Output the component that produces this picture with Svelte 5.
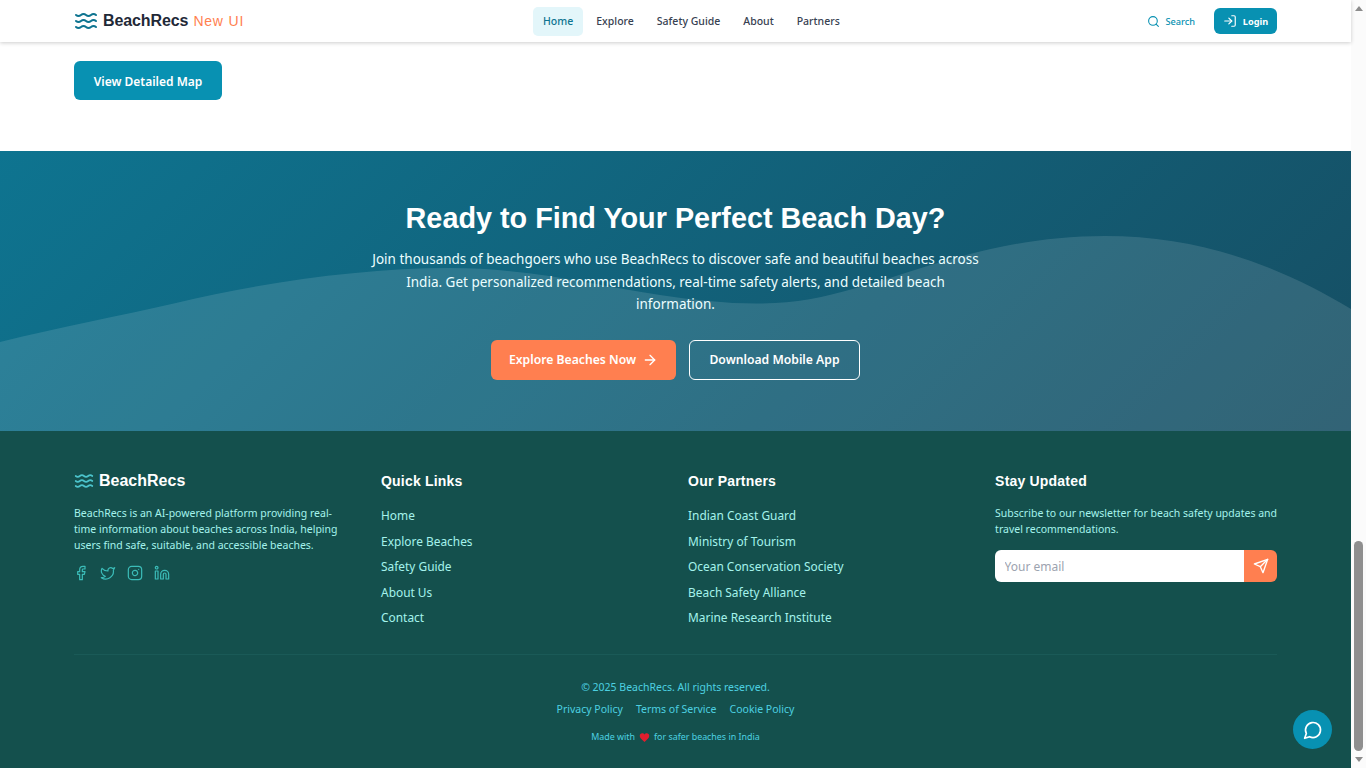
<script>
  const nav = ['Home', 'Explore', 'Safety Guide', 'About', 'Partners'];
  const quickLinks = ['Home', 'Explore Beaches', 'Safety Guide', 'About Us', 'Contact'];
  const partners = ['Indian Coast Guard', 'Ministry of Tourism', 'Ocean Conservation Society', 'Beach Safety Alliance', 'Marine Research Institute'];
  const legal = ['Privacy Policy', 'Terms of Service', 'Cookie Policy'];
</script>

{#snippet waves(size)}
  <svg width={size} height={size} viewBox="0 0 24 24" fill="none" stroke="currentColor" stroke-width="2" stroke-linecap="round" stroke-linejoin="round">
    <path d="M2 6c.6.5 1.2 1 2.5 1C7 7 7 5 9.5 5c2.6 0 2.4 2 5 2 2.5 0 2.5-2 5-2 1.3 0 1.9.5 2.5 1" />
    <path d="M2 12c.6.5 1.2 1 2.5 1 2.5 0 2.5-2 5-2 2.6 0 2.4 2 5 2 2.5 0 2.5-2 5-2 1.3 0 1.9.5 2.5 1" />
    <path d="M2 18c.6.5 1.2 1 2.5 1 2.5 0 2.5-2 5-2 2.6 0 2.4 2 5 2 2.5 0 2.5-2 5-2 1.3 0 1.9.5 2.5 1" />
  </svg>
{/snippet}

<div class="viewport">
  <div class="page">
    <header class="topbar">
      <div class="brand">
        <span class="brand-icon">{@render waves(24)}</span>
        <span class="brand-name">BeachRecs</span>
        <span class="brand-tag">New UI</span>
      </div>
      <nav class="nav">
        {#each nav as item, i}
          <a class="nav-link" class:active={i === 0} href="#top">{item}</a>
        {/each}
      </nav>
      <div class="actions">
        <button class="search-btn">
          <svg width="13" height="13" viewBox="0 0 24 24" fill="none" stroke="currentColor" stroke-width="2" stroke-linecap="round" stroke-linejoin="round"><circle cx="11" cy="11" r="8" /><path d="m21 21-4.3-4.3" /></svg>
          Search
        </button>
        <button class="login-btn">
          <svg width="14" height="14" viewBox="0 0 24 24" fill="none" stroke="currentColor" stroke-width="2" stroke-linecap="round" stroke-linejoin="round"><path d="M15 3h4a2 2 0 0 1 2 2v14a2 2 0 0 1-2 2h-4" /><path d="m10 17 5-5-5-5" /><path d="M15 12H3" /></svg>
          Login
        </button>
      </div>
    </header>

    <section class="map-end">
      <button class="map-btn">View Detailed Map</button>
    </section>

    <section class="cta">
      <svg class="cta-wave" viewBox="0 0 1351 280" preserveAspectRatio="none">
        <path d="M0 191C60 176 120 165 176 152C260 132 360 117 450 117C530 117 600 135 660 144C700 150 740 154 775 152C870 148 960 85 1105 85C1200 85 1280 115 1351 158V280H0Z" />
      </svg>
      <div class="cta-body">
        <h2>Ready to Find Your Perfect Beach Day?</h2>
        <p>Join thousands of beachgoers who use BeachRecs to discover safe and beautiful beaches across India. Get personalized recommendations, real-time safety alerts, and detailed beach information.</p>
        <div class="cta-buttons">
          <button class="btn-coral">
            Explore Beaches Now
            <svg width="16" height="16" viewBox="0 0 24 24" fill="none" stroke="currentColor" stroke-width="2" stroke-linecap="round" stroke-linejoin="round"><path d="M5 12h14" /><path d="m12 5 7 7-7 7" /></svg>
          </button>
          <button class="btn-outline">Download Mobile App</button>
        </div>
      </div>
    </section>

    <footer class="footer">
      <div class="footer-grid">
        <div>
          <div class="footer-brand">
            <span class="footer-brand-icon">{@render waves(20)}</span>
            <span>BeachRecs</span>
          </div>
          <p class="footer-text">BeachRecs is an AI-powered platform providing real-<br />time information about beaches across India, helping<br />users find safe, suitable, and accessible beaches.</p>
          <div class="socials">
            <svg width="16" height="16" viewBox="0 0 24 24"><path d="M18 2h-3a5 5 0 0 0-5 5v3H7v4h3v8h4v-8h3l1-4h-4V7a1 1 0 0 1 1-1h3z" /></svg>
            <svg width="16" height="16" viewBox="0 0 24 24"><path d="M22 4s-.7 2.1-2 3.4c1.6 10-9.4 17.3-18 11.6 2.2.1 4.4-.6 6-2C3 15.5.5 9.6 3 5c2.2 2.6 5.6 4.1 9 4-.9-4.2 4-6.6 7-3.8 1.1 0 3-1.2 3-1.2z" /></svg>
            <svg width="16" height="16" viewBox="0 0 24 24"><rect x="2" y="2" width="20" height="20" rx="5" /><path d="M16 11.37A4 4 0 1 1 12.63 8 4 4 0 0 1 16 11.37z" /><path d="M17.5 6.5h.01" /></svg>
            <svg width="16" height="16" viewBox="0 0 24 24"><path d="M16 8a6 6 0 0 1 6 6v7h-4v-7a2 2 0 0 0-2-2 2 2 0 0 0-2 2v7h-4v-7a6 6 0 0 1 6-6z" /><rect x="2" y="9" width="4" height="12" /><circle cx="4" cy="4" r="2" /></svg>
          </div>
        </div>
        <div>
          <h3>Quick Links</h3>
          <ul>
            {#each quickLinks as link}
              <li>{link}</li>
            {/each}
          </ul>
        </div>
        <div>
          <h3>Our Partners</h3>
          <ul>
            {#each partners as link}
              <li>{link}</li>
            {/each}
          </ul>
        </div>
        <div>
          <h3>Stay Updated</h3>
          <p class="footer-text">Subscribe to our newsletter for beach safety updates and<br />travel recommendations.</p>
          <div class="subscribe">
            <input placeholder="Your email" />
            <button aria-label="Subscribe">
              <svg width="16" height="16" viewBox="0 0 24 24" fill="none" stroke="currentColor" stroke-width="2" stroke-linecap="round" stroke-linejoin="round"><path d="m22 2-7 20-4-9-9-4Z" /><path d="M22 2 11 13" /></svg>
            </button>
          </div>
        </div>
      </div>
      <div class="footer-bottom">
        <div class="copyright">© 2025 BeachRecs. All rights reserved.</div>
        <div class="legal">
          {#each legal as item}
            <span>{item}</span>
          {/each}
        </div>
        <div class="made">
          Made with
          <svg width="11" height="11" viewBox="0 0 24 24"><path d="M12 21.6C5 16 1.6 12.4 1.6 8.2 1.6 5 4 2.8 7 2.8c2 0 3.900 1 5 2.800 1.100-1.800 3-2.800 5-2.800 3 0 5.400 2.200 5.400 5.400 0 4.200-3.400 7.800-10.400 13.400z" /></svg>
          for safer beaches in India
        </div>
      </div>
    </footer>

    <button class="chat" aria-label="Chat">
      <svg width="20" height="20" viewBox="0 0 24 24" fill="none" stroke="currentColor" stroke-width="2" stroke-linecap="round" stroke-linejoin="round"><path d="M7.900 20A9 9 0 1 0 4 16.100L2 22Z" /></svg>
    </button>
  </div>

  <div class="scrollbar">
    <span class="arrow-up"></span>
    <div class="thumb-track"><div class="thumb"></div></div>
    <span class="arrow-down"></span>
  </div>
</div>

<style>
  :global(body) {
    background: #fff;
    font-family: "Noto Sans", sans-serif;
  }
  button {
    font-family: inherit;
    border: none;
    cursor: pointer;
  }
  .viewport {
    display: flex;
    height: 768px;
    overflow: hidden;
  }
  .page {
    position: relative;
    flex: 1;
    min-width: 0;
  }
  .topbar {
    height: 42px;
    padding: 0 74px;
    display: grid;
    grid-template-columns: 459px auto 1fr;
    align-items: center;
    background: #fff;
    box-shadow: 0 1px 4px rgba(0, 0, 0, 0.2);
  }
  .brand {
    display: flex;
    align-items: center;
  }
  .brand-icon {
    display: flex;
    color: #0e7490;
    margin-right: 5px;
  }
  .brand-name {
    font: bold 16px "Liberation Sans", sans-serif;
    letter-spacing: -0.1px;
    color: #1f2937;
  }
  .brand-tag {
    font: 14px "Liberation Sans", sans-serif;
    letter-spacing: 0.8px;
    color: #ff7f50;
    margin-left: 5px;
  }
  .nav {
    display: flex;
    gap: 3px;
  }
  .nav-link {
    padding: 0 10px;
    height: 29px;
    line-height: 29px;
    border-radius: 5px;
    font-size: 10.500px;
    font-weight: 500;
    color: #374151;
    text-decoration: none;
  }
  .nav-link.active {
    background: #e3f6fa;
    color: #0e7490;
  }
  .actions {
    display: flex;
    justify-content: flex-end;
    align-items: center;
    gap: 19px;
  }
  .search-btn {
    display: flex;
    align-items: center;
    gap: 5px;
    padding: 0;
    background: none;
    color: #0891b2;
    font-size: 9.200px;
    font-weight: 500;
  }
  .login-btn {
    display: flex;
    align-items: center;
    gap: 6px;
    height: 26px;
    width: 63px;
    justify-content: center;
    border-radius: 6px;
    background: #0891b2;
    color: #fff;
    font-size: 9.200px;
    font-weight: 700;
  }
  .map-end {
    height: 109px;
    padding: 19px 74px 0;
    box-sizing: border-box;
  }
  .map-btn {
    width: 148px;
    height: 39px;
    padding: 2px 0 0;
    border-radius: 6px;
    background: #0891b2;
    color: #fff;
    font-size: 12px;
    font-weight: 600;
  }
  .cta {
    position: relative;
    height: 280px;
    background: linear-gradient(135deg, #0e7490, #164e63);
    color: #fff;
  }
  .cta-wave {
    position: absolute;
    inset: 0;
    width: 100%;
    height: 100%;
  }
  .cta-wave path {
    fill: rgba(255, 255, 255, 0.12);
  }
  .cta-body {
    position: relative;
    width: 620px;
    margin: 0 auto;
    padding-top: 49px;
    text-align: center;
  }
  h2 {
    margin: 0;
    font: bold 28.800px/36px "Liberation Sans", sans-serif;
  }
  .cta-body p {
    margin: 12px 0 0;
    font-size: 13.500px;
    line-height: 22.600px;
    color: #ecfeff;
  }
  .cta-buttons {
    display: flex;
    justify-content: center;
    gap: 13px;
    margin-top: 24px;
  }
  .btn-coral,
  .btn-outline {
    display: flex;
    align-items: center;
    justify-content: center;
    height: 40px;
    padding: 0;
    border-radius: 6px;
    color: #fff;
    font-size: 12.200px;
    font-weight: 600;
    box-sizing: border-box;
  }
  .btn-coral {
    width: 185px;
    gap: 6px;
    background: #ff7f50;
  }
  .btn-outline {
    width: 171px;
    background: transparent;
    border: 1px solid #fff;
  }
  .footer {
    height: 337px;
    box-sizing: border-box;
    padding: 39px 74px 0;
    background: #14504d;
    color: #a5f3ec;
  }
  .footer-grid {
    display: grid;
    grid-template-columns: repeat(4, 1fr);
    gap: 25.600px;
    height: 184px;
    border-bottom: 1px solid #1a5a57;
  }
  .footer-brand {
    display: flex;
    align-items: center;
    gap: 5px;
    height: 22px;
    font: bold 16px "Liberation Sans", sans-serif;
    color: #fff;
  }
  .footer-brand-icon {
    display: flex;
    color: #4cc4cc;
  }
  .footer-text {
    margin: 13px 0 0;
    font-size: 10.500px;
    line-height: 16px;
    white-space: nowrap;
  }
  .socials {
    display: flex;
    gap: 11px;
    margin: 12px 0 0 -1px;
  }
  .socials svg {
    fill: none;
    stroke: #3bbcb8;
    stroke-width: 1.800;
    stroke-linecap: round;
    stroke-linejoin: round;
  }
  h3 {
    margin: 0;
    height: 22px;
    font: bold 14px/22px "Liberation Sans", sans-serif;
    letter-spacing: 0.2px;
    color: #fff;
  }
  ul {
    margin: 11px 0 0;
    padding: 0;
    list-style: none;
  }
  li {
    height: 25.600px;
    line-height: 25.600px;
    font-size: 11.900px;
  }
  .subscribe {
    display: flex;
    height: 32px;
    margin-top: 13px;
  }
  .subscribe input {
    flex: 1;
    min-width: 0;
    border: none;
    padding: 0 9.500px;
    border-radius: 6px 0 0 6px;
    background: #fff;
    font-family: inherit;
    font-size: 12px;
  }
  .subscribe input::placeholder {
    color: #9ca3af;
  }
  .subscribe button {
    display: flex;
    align-items: center;
    justify-content: center;
    width: 33px;
    padding: 0;
    border-radius: 0 6px 6px 0;
    background: #ff7f50;
    color: #fff;
  }
  .footer-bottom {
    padding-top: 24px;
    text-align: center;
    color: #4dd0e1;
  }
  .copyright {
    height: 16px;
    line-height: 16px;
    font-size: 10.500px;
  }
  .legal {
    display: flex;
    justify-content: center;
    gap: 13px;
    margin-top: 6px;
    line-height: 16px;
    font-size: 10.500px;
  }
  .made {
    display: flex;
    justify-content: center;
    align-items: center;
    gap: 4px;
    margin-top: 12px;
    line-height: 16px;
    font-size: 8.900px;
  }
  .made svg {
    fill: #e01e2e;
  }
  .chat {
    position: absolute;
    left: 1293px;
    top: 710px;
    width: 39px;
    height: 39px;
    padding: 0;
    display: flex;
    align-items: center;
    justify-content: center;
    border-radius: 50%;
    background: #0891b2;
    color: #fff;
  }
  .scrollbar {
    width: 15px;
    flex-shrink: 0;
    display: flex;
    flex-direction: column;
    align-items: center;
    background: #fbfbfb;
  }
  .arrow-up,
  .arrow-down {
    flex-shrink: 0;
    width: 0;
    height: 0;
    border-left: 4.500px solid transparent;
    border-right: 4.500px solid transparent;
  }
  .arrow-up {
    margin-top: 6px;
    border-bottom: 5px solid #8c8c8c;
  }
  .arrow-down {
    margin-bottom: 6px;
    border-top: 5px solid #8c8c8c;
  }
  .thumb-track {
    flex: 1;
    align-self: stretch;
    display: flex;
    flex-direction: column;
    justify-content: flex-end;
    align-items: center;
    padding-bottom: 6px;
  }
  .thumb {
    width: 9px;
    height: 210px;
    border-radius: 5px;
    background: #8f8f8f;
  }
</style>
